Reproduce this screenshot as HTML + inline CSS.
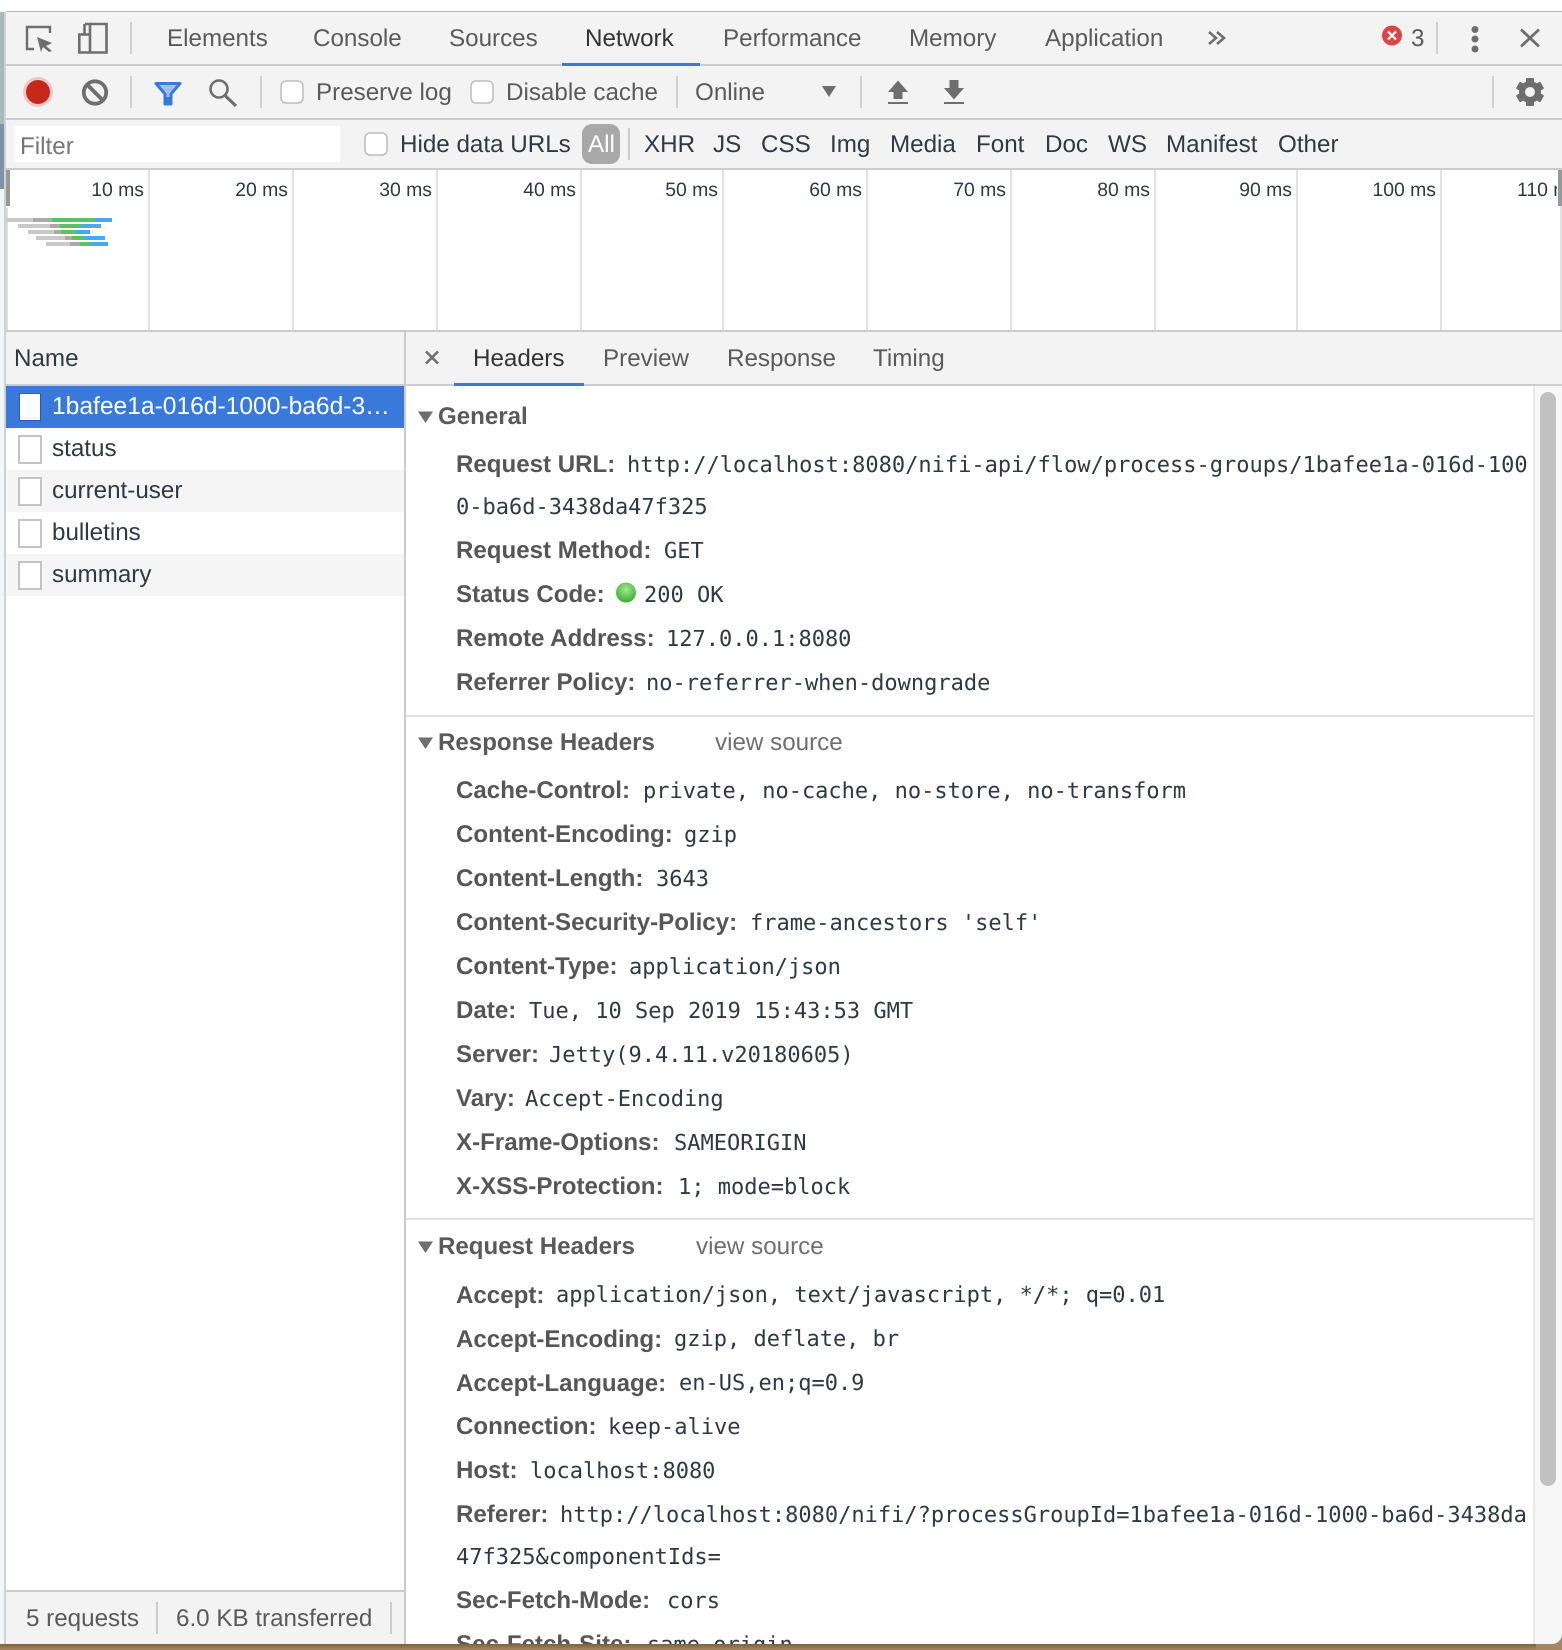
<!DOCTYPE html>
<html><head><meta charset="utf-8"><style>
html,body{margin:0;padding:0;background:#fff}
#r{position:relative;width:1562px;height:1650px;overflow:hidden;background:#fff;font-family:"Liberation Sans",Arial,sans-serif;font-size:24.2px;color:#303942;text-rendering:geometricPrecision}
#r div{position:absolute}
.t{position:absolute;white-space:pre;line-height:30px;margin-top:1px}
.g{color:#5a5a5a}
.b{font-weight:bold;color:#565656;font-size:24.1px}
.m{font-family:"DejaVu Sans Mono",monospace;font-size:22px;color:#303942;margin-top:2px}
.o{font-size:19.4px;text-align:right;width:100px;margin-top:1px}
.s{font-weight:bold;color:#5a5a5a;font-size:24.1px}
svg{position:absolute;left:0;top:0}
</style></head><body><div id="r">
<!-- bars -->
<div style="left:0;top:12px;width:5px;height:112px;background:#a9b8bd"></div>
<div style="left:0;top:124px;width:5px;height:65px;background:#7a93a8"></div>
<div style="left:0;top:189px;width:5px;height:1455px;background:#f4f6f7"></div>
<div style="left:4px;top:12px;width:2px;height:1632px;background:#d0d0d0"></div>
<div style="left:6px;top:11px;width:1556px;height:1px;background:#bbb"></div>
<div style="left:6px;top:12px;width:1556px;height:52px;background:#f3f3f3"></div>
<div style="left:6px;top:64px;width:1556px;height:2px;background:#ccc"></div>
<div style="left:6px;top:66px;width:1556px;height:52px;background:#f3f3f3"></div>
<div style="left:6px;top:118px;width:1556px;height:2px;background:#ccc"></div>
<div style="left:6px;top:120px;width:1556px;height:48px;background:#f3f3f3"></div>
<div style="left:6px;top:168px;width:1556px;height:2px;background:#ccc"></div>
<div style="left:562px;top:63px;width:138px;height:3px;background:#3879d9"></div>
<!-- top tabs -->
<span class="t g" style="left:167px;top:23px">Elements</span>
<span class="t g" style="left:313px;top:23px">Console</span>
<span class="t g" style="left:449px;top:23px">Sources</span>
<span class="t" style="left:585px;top:23px;color:#333">Network</span>
<span class="t g" style="left:723px;top:23px">Performance</span>
<span class="t g" style="left:909px;top:23px">Memory</span>
<span class="t g" style="left:1045px;top:23px">Application</span>
<span class="t g" style="left:1411px;top:23px">3</span>
<!-- toolbar -->
<span class="t g" style="left:316px;top:77px">Preserve log</span>
<span class="t g" style="left:506px;top:77px">Disable cache</span>
<span class="t g" style="left:695px;top:77px">Online</span>
<!-- filter -->
<div style="left:14px;top:126px;width:326px;height:36px;background:#fff"></div>
<span class="t" style="left:20px;top:131px;color:#757575">Filter</span>
<span class="t" style="left:400px;top:129px">Hide data URLs</span>
<div style="left:582px;top:124px;width:38px;height:40px;border-radius:10px;background:#a8a8a8"></div>
<span class="t" style="left:588px;top:129px;color:#fff">All</span>
<div style="left:628px;top:128px;width:2px;height:32px;background:#ccc"></div>
<span class="t" style="left:644px;top:129px">XHR</span>
<span class="t" style="left:713px;top:129px">JS</span>
<span class="t" style="left:761px;top:129px">CSS</span>
<span class="t" style="left:830px;top:129px">Img</span>
<span class="t" style="left:890px;top:129px">Media</span>
<span class="t" style="left:976px;top:129px">Font</span>
<span class="t" style="left:1045px;top:129px">Doc</span>
<span class="t" style="left:1108px;top:129px">WS</span>
<span class="t" style="left:1166px;top:129px">Manifest</span>
<span class="t" style="left:1278px;top:129px">Other</span>
<!-- overview -->
<div style="left:6px;top:170px;width:1554px;height:160px;background:#fff"></div>
<div style="left:148px;top:170px;width:2px;height:160px;background:#e2e2e2"></div>
<div style="left:292px;top:170px;width:2px;height:160px;background:#e2e2e2"></div>
<div style="left:436px;top:170px;width:2px;height:160px;background:#e2e2e2"></div>
<div style="left:580px;top:170px;width:2px;height:160px;background:#e2e2e2"></div>
<div style="left:722px;top:170px;width:2px;height:160px;background:#e2e2e2"></div>
<div style="left:866px;top:170px;width:2px;height:160px;background:#e2e2e2"></div>
<div style="left:1010px;top:170px;width:2px;height:160px;background:#e2e2e2"></div>
<div style="left:1154px;top:170px;width:2px;height:160px;background:#e2e2e2"></div>
<div style="left:1296px;top:170px;width:2px;height:160px;background:#e2e2e2"></div>
<div style="left:1440px;top:170px;width:2px;height:160px;background:#e2e2e2"></div>
<div style="left:1560px;top:206px;width:2px;height:124px;background:#e2e2e2"></div>
<div style="left:6px;top:208px;width:2px;height:122px;background:#ddd"></div>
<span class="t o" style="left:44px;top:174px">10 ms</span>
<span class="t o" style="left:188px;top:174px">20 ms</span>
<span class="t o" style="left:332px;top:174px">30 ms</span>
<span class="t o" style="left:476px;top:174px">40 ms</span>
<span class="t o" style="left:618px;top:174px">50 ms</span>
<span class="t o" style="left:762px;top:174px">60 ms</span>
<span class="t o" style="left:906px;top:174px">70 ms</span>
<span class="t o" style="left:1050px;top:174px">80 ms</span>
<span class="t o" style="left:1192px;top:174px">90 ms</span>
<span class="t o" style="left:1336px;top:174px">100 ms</span>
<div style="left:1500px;top:170px;width:57px;height:40px;overflow:hidden"><span class="t o" style="left:17px;top:4px;text-align:left">110 ms</span></div>
<div style="left:6px;top:170px;width:4px;height:36px;background:#999"></div>
<div style="left:1558px;top:170px;width:4px;height:36px;background:#999"></div>
<!-- waterfall -->
<div style="left:6px;top:218px;width:27px;height:4px;background:#c9c9c9"></div><div style="left:33px;top:218px;width:19px;height:4px;background:#aaa"></div><div style="left:52px;top:218px;width:43px;height:4px;background:#5ac35f"></div><div style="left:95px;top:218px;width:17px;height:4px;background:#4aa8f0"></div>
<div style="left:18px;top:224px;width:32px;height:4px;background:#c9c9c9"></div><div style="left:50px;top:224px;width:10px;height:4px;background:#aaa"></div><div style="left:60px;top:224px;width:21px;height:4px;background:#5ac35f"></div><div style="left:81px;top:224px;width:20px;height:4px;background:#4aa8f0"></div>
<div style="left:28px;top:230px;width:26px;height:4px;background:#c9c9c9"></div><div style="left:54px;top:230px;width:7px;height:4px;background:#aaa"></div><div style="left:61px;top:230px;width:15px;height:4px;background:#5ac35f"></div><div style="left:76px;top:230px;width:14px;height:4px;background:#4aa8f0"></div>
<div style="left:36px;top:236px;width:29px;height:4px;background:#c9c9c9"></div><div style="left:65px;top:236px;width:7px;height:4px;background:#aaa"></div><div style="left:72px;top:236px;width:12px;height:4px;background:#5ac35f"></div><div style="left:84px;top:236px;width:21px;height:4px;background:#4aa8f0"></div>
<div style="left:46px;top:242px;width:24px;height:4px;background:#c9c9c9"></div><div style="left:70px;top:242px;width:10px;height:4px;background:#aaa"></div><div style="left:80px;top:242px;width:11px;height:4px;background:#5ac35f"></div><div style="left:91px;top:242px;width:17px;height:4px;background:#4aa8f0"></div>
<!-- header row -->
<div style="left:6px;top:330px;width:1556px;height:2px;background:#ccc"></div>
<div style="left:6px;top:332px;width:1556px;height:52px;background:#f3f3f3"></div>
<div style="left:6px;top:384px;width:1556px;height:2px;background:#ccc"></div>
<div style="left:404px;top:332px;width:2px;height:1312px;background:#ccc"></div>
<span class="t" style="left:14px;top:343px">Name</span>
<span class="t" style="left:473px;top:343px;color:#333">Headers</span>
<span class="t g" style="left:603px;top:343px">Preview</span>
<span class="t g" style="left:727px;top:343px">Response</span>
<span class="t g" style="left:873px;top:343px">Timing</span>
<div style="left:454px;top:383px;width:130px;height:3px;background:#3879d9"></div>
<!-- list -->
<div style="left:6px;top:386px;width:398px;height:42px;background:#3879d9"></div>
<div style="left:6px;top:470px;width:398px;height:42px;background:#f5f5f5"></div>
<div style="left:6px;top:554px;width:398px;height:42px;background:#f5f5f5"></div>
<div style="left:19px;top:393px;width:22px;height:28px;background:#fff;border:1px solid #2a5cab;box-sizing:border-box"></div>
<div style="left:18px;top:435px;width:24px;height:29px;background:#fff;border:2px solid #c4c4c4;box-sizing:border-box"></div>
<div style="left:18px;top:477px;width:24px;height:29px;background:#fff;border:2px solid #c4c4c4;box-sizing:border-box"></div>
<div style="left:18px;top:519px;width:24px;height:29px;background:#fff;border:2px solid #c4c4c4;box-sizing:border-box"></div>
<div style="left:18px;top:561px;width:24px;height:29px;background:#fff;border:2px solid #c4c4c4;box-sizing:border-box"></div>
<span class="t" style="left:52px;top:391px;color:#fff;font-size:24.6px">1bafee1a-016d-1000-ba6d-3…</span>
<span class="t" style="left:52px;top:433px">status</span>
<span class="t" style="left:52px;top:475px">current-user</span>
<span class="t" style="left:52px;top:517px">bulletins</span>
<span class="t" style="left:52px;top:559px">summary</span>
<!-- list footer -->
<div style="left:6px;top:1590px;width:398px;height:2px;background:#ccc"></div>
<div style="left:6px;top:1592px;width:398px;height:52px;background:#f3f3f3"></div>
<div style="left:156px;top:1602px;width:2px;height:32px;background:#ccc"></div>
<div style="left:390px;top:1602px;width:2px;height:32px;background:#ccc"></div>
<span class="t g" style="left:26px;top:1603px">5 requests</span>
<span class="t g" style="left:176px;top:1603px">6.0 KB transferred</span>
<!-- general -->
<span class="t s" style="left:438px;top:401px">General</span>
<span class="t b" style="left:456px;top:449px">Request URL:</span><span class="t m" style="left:627px;top:449px">http://localhost:8080/nifi-api/flow/process-groups/1bafee1a-016d-100</span>
<span class="t m" style="left:456px;top:491px">0-ba6d-3438da47f325</span>
<span class="t b" style="left:456px;top:535px">Request Method:</span><span class="t m" style="left:664px;top:535px">GET</span>
<span class="t b" style="left:456px;top:579px">Status Code:</span><span class="t m" style="left:644px;top:579px">200 OK</span>
<span class="t b" style="left:456px;top:623px">Remote Address:</span><span class="t m" style="left:666px;top:623px">127.0.0.1:8080</span>
<span class="t b" style="left:456px;top:667px">Referrer Policy:</span><span class="t m" style="left:646px;top:667px">no-referrer-when-downgrade</span>
<div style="left:406px;top:715px;width:1127px;height:2px;background:#e2e2e2"></div>
<!-- response -->
<span class="t s" style="left:438px;top:727px">Response Headers</span>
<span class="t" style="left:715px;top:727px;color:#6e6e6e">view source</span>
<span class="t b" style="left:456px;top:775px">Cache-Control:</span><span class="t m" style="left:643px;top:775px">private, no-cache, no-store, no-transform</span>
<span class="t b" style="left:456px;top:819px">Content-Encoding:</span><span class="t m" style="left:684px;top:819px">gzip</span>
<span class="t b" style="left:456px;top:863px">Content-Length:</span><span class="t m" style="left:656px;top:863px">3643</span>
<span class="t b" style="left:456px;top:907px">Content-Security-Policy:</span><span class="t m" style="left:750px;top:907px">frame-ancestors 'self'</span>
<span class="t b" style="left:456px;top:951px">Content-Type:</span><span class="t m" style="left:629px;top:951px">application/json</span>
<span class="t b" style="left:456px;top:995px">Date:</span><span class="t m" style="left:529px;top:995px">Tue, 10 Sep 2019 15:43:53 GMT</span>
<span class="t b" style="left:456px;top:1039px">Server:</span><span class="t m" style="left:549px;top:1039px">Jetty(9.4.11.v20180605)</span>
<span class="t b" style="left:456px;top:1083px">Vary:</span><span class="t m" style="left:525px;top:1083px">Accept-Encoding</span>
<span class="t b" style="left:456px;top:1127px">X-Frame-Options:</span><span class="t m" style="left:674px;top:1127px">SAMEORIGIN</span>
<span class="t b" style="left:456px;top:1171px">X-XSS-Protection:</span><span class="t m" style="left:678px;top:1171px">1; mode=block</span>
<div style="left:406px;top:1218px;width:1127px;height:2px;background:#e2e2e2"></div>
<!-- request -->
<span class="t s" style="left:438px;top:1231px">Request Headers</span>
<span class="t" style="left:696px;top:1231px;color:#6e6e6e">view source</span>
<span class="t b" style="left:456px;top:1280px">Accept:</span><span class="t m" style="left:556px;top:1279px">application/json, text/javascript, */*; q=0.01</span>
<span class="t b" style="left:456px;top:1324px">Accept-Encoding:</span><span class="t m" style="left:674px;top:1323px">gzip, deflate, br</span>
<span class="t b" style="left:456px;top:1368px">Accept-Language:</span><span class="t m" style="left:679px;top:1367px">en-US,en;q=0.9</span>
<span class="t b" style="left:456px;top:1411px">Connection:</span><span class="t m" style="left:608px;top:1411px">keep-alive</span>
<span class="t b" style="left:456px;top:1455px">Host:</span><span class="t m" style="left:530px;top:1455px">localhost:8080</span>
<span class="t b" style="left:456px;top:1499px">Referer:</span><span class="t m" style="left:560px;top:1499px">http://localhost:8080/nifi/?processGroupId=1bafee1a-016d-1000-ba6d-3438da</span>
<span class="t m" style="left:456px;top:1541px">47f325&amp;componentIds=</span>
<span class="t b" style="left:456px;top:1585px">Sec-Fetch-Mode:</span><span class="t m" style="left:667px;top:1585px">cors</span>
<span class="t b" style="left:456px;top:1629px">Sec-Fetch-Site:</span><span class="t m" style="left:647px;top:1629px">same-origin</span>
<!-- bottom + scrollbar -->
<div style="left:0;top:1644px;width:1562px;height:6px;background:linear-gradient(#7d6240,#a58660)"></div>
<div style="left:1536px;top:1630px;width:26px;height:20px;background:#a58660"></div>
<div style="left:1533px;top:386px;width:29px;height:1258px;background:#f7f7f7;border-left:2px solid #e8e8e8;box-sizing:border-box;border-bottom-right-radius:10px"></div>
<div style="left:1540px;top:392px;width:16px;height:1094px;border-radius:8px;background:#c1c1c1"></div>
<!-- icons -->
<svg width="1562" height="1650" viewBox="0 0 1562 1650" fill="none">
<g stroke="#cfcfcf" stroke-width="2">
<path d="M131 22V54M131 76V108M261 76V108M677 76V108M861 76V108M1493 76V108M1437 22V54"/>
</g>
<!-- inspect -->
<path d="M50 33V27H27V49H34" stroke="#6e6e6e" stroke-width="2.4"/>
<path d="M37 37L52 43L46 46L52 51L49 52L43 47L41 52Z" fill="#6e6e6e"/>
<!-- device -->
<path d="M90 24H106.500V52.500H90" stroke="#6e6e6e" stroke-width="2.600"/>
<path d="M85 24H90V34M79.300 34.500H90V52.500H79.300Z" stroke="#6e6e6e" stroke-width="2.600"/>
<path d="M84.500 24V34" stroke="#6e6e6e" stroke-width="2.600"/>
<!-- record -->
<circle cx="38" cy="92" r="15" fill="#c5291c" opacity=".2"/>
<circle cx="38" cy="92" r="12" fill="#c5291c"/>
<!-- clear -->
<circle cx="95" cy="92.500" r="11.200" stroke="#6e6e6e" stroke-width="3.800"/>
<path d="M87 84.500L103 100.500" stroke="#6e6e6e" stroke-width="3.800"/>
<!-- funnel -->
<path d="M156 83.500H180L171 94V104H165V94Z" fill="#a3bfe9" stroke="#3879d9" stroke-width="3" stroke-linejoin="round"/>
<path d="M165 97H171V104H165Z" fill="#3879d9"/>
<!-- search -->
<circle cx="219" cy="89" r="8.500" stroke="#6e6e6e" stroke-width="2.600"/>
<path d="M225 95.500L236 106" stroke="#6e6e6e" stroke-width="3.200"/>
<!-- checkboxes -->
<rect x="281" y="81" width="22" height="22" rx="5" fill="#fff" stroke="#bdbdbd" stroke-width="1.500"/>
<rect x="471" y="81" width="22" height="22" rx="5" fill="#fff" stroke="#bdbdbd" stroke-width="1.500"/>
<rect x="365" y="133" width="22" height="22" rx="5" fill="#fff" stroke="#bdbdbd" stroke-width="1.500"/>
<!-- dropdown -->
<path d="M822 86H836L829 97Z" fill="#6e6e6e"/>
<!-- upload -->
<path d="M898 80.500L908 92H902.500V99H893.500V92H888Z" fill="#6e6e6e"/>
<path d="M888 103H908" stroke="#6e6e6e" stroke-width="2"/>
<!-- download -->
<path d="M949.500 80H958.500V88H964L954 99.500L944 88H949.500Z" fill="#6e6e6e"/>
<path d="M944 103H964" stroke="#6e6e6e" stroke-width="2"/>
<!-- gear -->
<g fill="#6e6e6e">
<rect x="1526" y="78" width="8" height="28" rx="1"/>
<rect x="1526" y="78" width="8" height="28" rx="1" transform="rotate(60 1530 92)"/>
<rect x="1526" y="78" width="8" height="28" rx="1" transform="rotate(120 1530 92)"/>
<circle cx="1530" cy="92" r="11"/>
</g>
<circle cx="1530" cy="92" r="5" fill="#f3f3f3"/>
<!-- chevrons -->
<path d="M1209 32L1216 38L1209 44M1217 32L1224 38L1217 44" stroke="#6e6e6e" stroke-width="2.600"/>
<!-- error -->
<circle cx="1392" cy="35.500" r="10" fill="#dc4545"/>
<path d="M1388 31.500L1396 39.500M1396 31.500L1388 39.500" stroke="#fff" stroke-width="2.200"/>
<!-- more -->
<circle cx="1475" cy="29.500" r="3.500" fill="#6e6e6e"/><circle cx="1475" cy="39" r="3.500" fill="#6e6e6e"/><circle cx="1475" cy="49" r="3.500" fill="#6e6e6e"/>
<!-- close -->
<path d="M1521 29.500L1539 46.500M1539 29.500L1521 46.500" stroke="#6e6e6e" stroke-width="2.800"/>
<path d="M426 351.500L438 363.500M438 351.500L426 363.500" stroke="#6e6e6e" stroke-width="2.600"/>
<!-- section triangles -->
<path d="M418 411.500H433L425.500 423Z" fill="#6e6e6e"/>
<path d="M418 737.500H433L425.500 749Z" fill="#6e6e6e"/>
<path d="M418 1241.500H433L425.500 1253Z" fill="#6e6e6e"/>
<!-- status dot -->
<defs><radialGradient id="gd" cx=".5" cy=".35" r=".7"><stop offset="0" stop-color="#a4e88e"/><stop offset="1" stop-color="#35a82d"/></radialGradient></defs>
<circle cx="626" cy="592.500" r="10" fill="url(#gd)"/>
</svg>
</div></body></html>
